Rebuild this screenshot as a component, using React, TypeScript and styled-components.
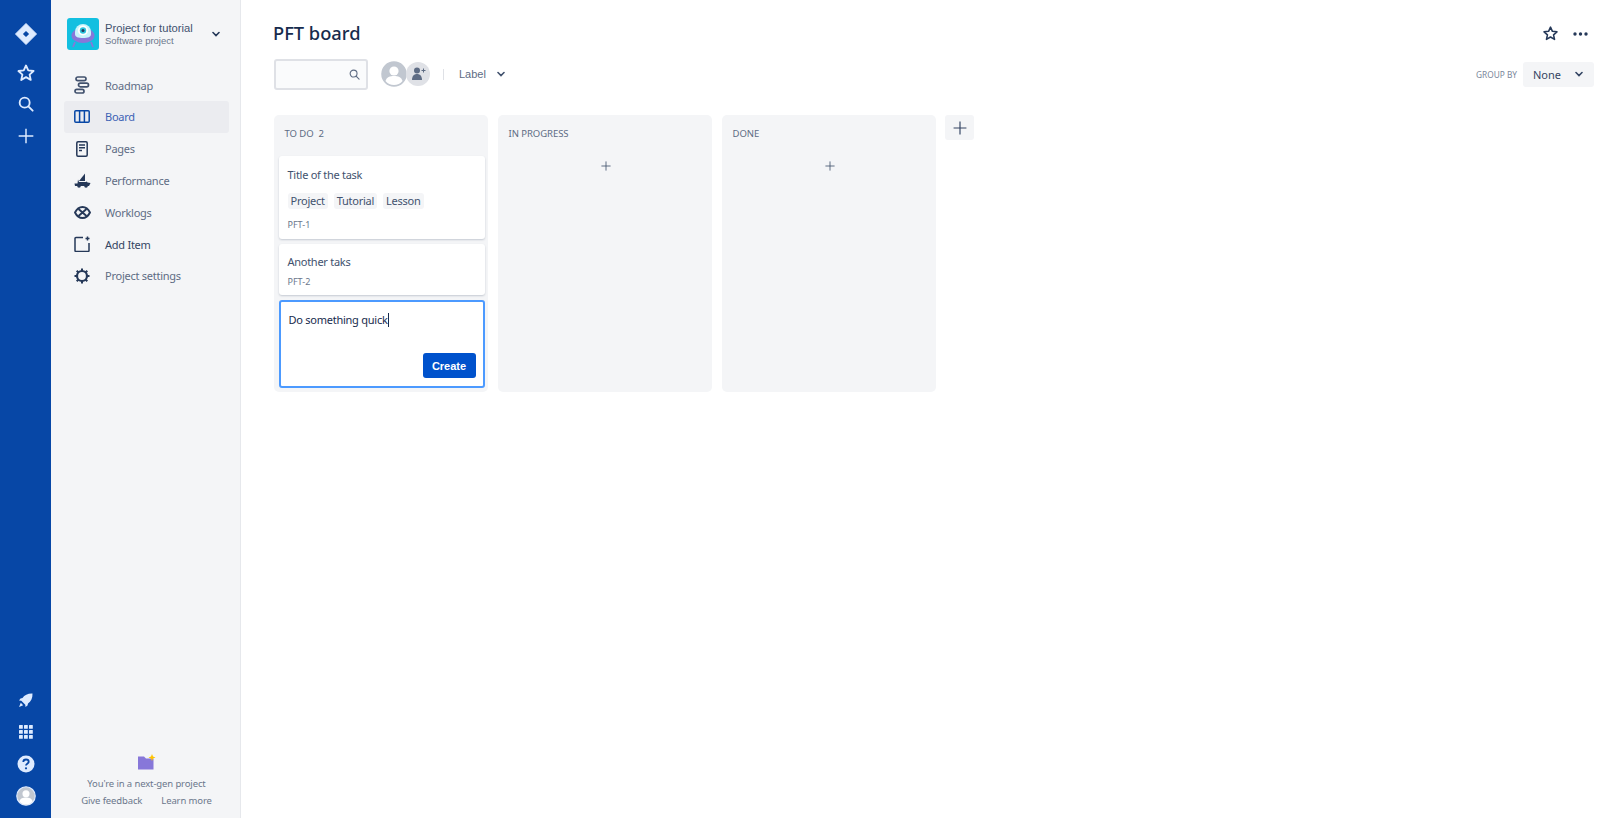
import React from "react";
import styled, { createGlobalStyle } from "styled-components";

const GlobalStyle = createGlobalStyle`
  html, body {
    margin: 0;
    padding: 0;
    height: 100%;
    background: #ffffff;
    overflow: hidden;
  }
  * {
    box-sizing: border-box;
  }
`;

const Page = styled.div`
  display: flex;
  width: 1600px;
  height: 818px;
  font-family: "Noto Sans", "Open Sans", sans-serif;
  color: #172b4d;
`;

const GlobalNav = styled.nav`
  width: 51px;
  flex: none;
  background: #0747a6;
  display: flex;
  flex-direction: column;
  align-items: center;
  justify-content: space-between;
  padding: 18px 0 6px;
`;

const GlobalGroup = styled.div`
  display: flex;
  flex-direction: column;
  align-items: center;
`;

const GlobalIcon = styled.div<{ $gap?: number }>`
  width: 32px;
  height: 32px;
  display: flex;
  align-items: center;
  justify-content: center;
  margin-bottom: ${(props) => props.$gap ?? 0}px;
`;

const SideNav = styled.aside`
  width: 190px;
  flex: none;
  background: #f4f5f7;
  border-right: 1px solid #e6e8ec;
  display: flex;
  flex-direction: column;
  padding: 18px 11px 0 13px;
`;

const ProjectHeader = styled.div`
  display: flex;
  align-items: center;
  height: 32px;
  margin-left: 3px;
  margin-bottom: 19px;
  padding-right: 9px;
`;

const ProjectAvatar = styled.div`
  width: 32px;
  height: 32px;
  border-radius: 3px;
  background: #12bfe0;
  overflow: hidden;
  flex: none;
`;

const ProjectText = styled.div`
  margin-left: 6px;
  flex: 1;
  min-width: 0;
  margin-top: -1px;
`;

const ProjectName = styled.div`
  font-family: "Liberation Sans", Arial, sans-serif;
  font-size: 11.2px;
  line-height: 13px;
  color: #42526e;
`;

const ProjectKind = styled.div`
  font-family: "Liberation Sans", Arial, sans-serif;
  font-size: 9.5px;
  line-height: 11px;
  color: #6b778c;
`;

const NavList = styled.div`
  display: flex;
  flex-direction: column;
`;

const NavRow = styled.div<{ $active?: boolean }>`
  display: flex;
  align-items: center;
  height: 32px;
  margin-bottom: -0.2px;
  border-radius: 3px;
  padding-left: 8px;
  background: ${(props) => (props.$active ? "#ebecf0" : "transparent")};
`;

const NavIcon = styled.div`
  width: 20px;
  height: 20px;
  display: flex;
  align-items: center;
  justify-content: center;
  margin-right: 13px;
  flex: none;
`;

const NavLabel = styled.span<{ $tone?: string }>`
  font-size: 11px;
  letter-spacing: -0.25px;
  color: ${(props) => props.$tone ?? "#5e6c84"};
`;

const SideFooter = styled.div`
  margin-top: auto;
  display: flex;
  flex-direction: column;
  align-items: center;
  padding-bottom: 10px;
  font-size: 9.5px;
  letter-spacing: -0.12px;
  color: #6b778c;
`;

const FooterText = styled.div`
  margin-top: 7px;
  line-height: 14px;
`;

const FooterLinks = styled.div`
  display: flex;
  gap: 19px;
  margin-top: 3px;
  line-height: 14px;
`;

const Main = styled.main`
  flex: 1;
  min-width: 0;
  padding: 18px 6px 0 33px;
`;

const TitleRow = styled.div`
  display: flex;
  align-items: center;
  justify-content: space-between;
  height: 30px;
`;

const Title = styled.h1`
  margin: 0 0 0 -1px;
  font-size: 18.3px;
  font-weight: 500;
  line-height: 30px;
  color: #172b4d;
`;

const TitleActions = styled.div`
  display: flex;
  align-items: center;
  gap: 14px;
  padding-right: 6px;
  margin-top: 1px;
`;

const Toolbar = styled.div`
  display: flex;
  align-items: center;
  height: 32px;
  margin-top: 10px;
`;

const SearchBox = styled.div`
  width: 94px;
  height: 31px;
  border: 2px solid #dfe1e6;
  border-radius: 3px;
  background: #fafbfc;
  display: flex;
  align-items: center;
  justify-content: flex-end;
  padding-right: 6px;
`;

const AvatarWrap = styled.div`
  display: flex;
  align-items: center;
  margin-left: 13px;
`;

const AddPerson = styled.div`
  width: 24px;
  height: 24px;
  border-radius: 50%;
  background: #dfe1e6;
  margin-left: -1px;
  display: flex;
  align-items: center;
  justify-content: center;
`;

const Divider = styled.div`
  width: 1px;
  height: 11px;
  background: #dfe1e6;
  margin: 0 15px 0 13px;
`;

const LabelFilter = styled.div`
  display: flex;
  align-items: center;
  gap: 11px;
  font-family: "Liberation Sans", Arial, sans-serif;
  font-size: 11px;
  color: #5e6c84;
`;

const GroupBy = styled.div`
  margin-left: auto;
  display: flex;
  align-items: center;
  gap: 6px;
`;

const GroupLabel = styled.span`
  font-size: 8.3px;
  color: #7a869a;
`;

const GroupSelect = styled.div`
  width: 71px;
  height: 25px;
  background: #f4f5f7;
  border-radius: 3px;
  display: flex;
  align-items: center;
  justify-content: space-between;
  padding: 0 11px 0 10px;
  font-size: 11px;
  color: #344563;
`;

const Board = styled.div`
  display: flex;
  align-items: flex-start;
  gap: 10px;
  margin-top: 25px;
`;

const Column = styled.section`
  width: 214px;
  height: 277px;
  background: #f4f5f7;
  border-radius: 5px;
  padding: 0 3.5px 0 4.5px;
`;

const ColumnHead = styled.div`
  height: 41px;
  display: flex;
  align-items: center;
  gap: 5px;
  padding: 0 0 4px 6px;
  font-size: 9.5px;
  letter-spacing: -0.05px;
  color: #5e6c84;
`;

const ColumnPlus = styled.div`
  display: flex;
  justify-content: center;
  margin-top: 5px;
`;

const Card = styled.article<{ $top: number; $bottom: number }>`
  background: #ffffff;
  border-radius: 3px;
  box-shadow: 0 1px 2px rgba(9, 30, 66, 0.2);
  padding: ${(props) => props.$top}px 9px ${(props) => props.$bottom}px;
  margin-bottom: 5px;
`;

const CardTitle = styled.div`
  font-size: 11px;
  letter-spacing: -0.27px;
  line-height: 18px;
  color: #42526e;
`;

const TagRow = styled.div`
  display: flex;
  gap: 6px;
  margin-top: 9px;
`;

const Tag = styled.span`
  background: #f4f5f7;
  border-radius: 3px;
  height: 16px;
  padding: 0 3px;
  font-size: 11px;
  letter-spacing: -0.25px;
  line-height: 16px;
  color: #42526e;
`;

const CardKey = styled.div<{ $top: number }>`
  font-size: 9px;
  line-height: 12px;
  color: #6b778c;
  margin-top: ${(props) => props.$top}px;
`;

const QuickCreate = styled.div`
  height: 88px;
  background: #ffffff;
  border: 2px solid #4c9aff;
  border-radius: 3px;
  padding: 9px 7px 8px 8px;
  display: flex;
  flex-direction: column;
  justify-content: space-between;
`;

const QuickText = styled.div`
  font-size: 11px;
  letter-spacing: -0.25px;
  line-height: 18px;
  color: #172b4d;
`;

const Caret = styled.span`
  display: inline-block;
  width: 1px;
  height: 14px;
  background: #172b4d;
  vertical-align: -3px;
`;

const CreateButton = styled.button`
  align-self: flex-end;
  width: 53px;
  height: 25px;
  border: none;
  border-radius: 3px;
  background: #0052cc;
  color: #ffffff;
  font-family: "Liberation Sans", Arial, sans-serif;
  font-size: 11px;
  font-weight: 700;
  padding: 0;
`;

const AddColumn = styled.div`
  width: 29px;
  height: 25px;
  background: #f4f5f7;
  border-radius: 3px;
  display: flex;
  align-items: center;
  justify-content: center;
  margin-left: -1px;
`;

const Star = ({ color, size }: { color: string; size: number }) => (
  <svg width={size} height={size} viewBox="0 0 24 24" fill="none" stroke={color} strokeWidth="2.2" strokeLinejoin="round">
    <path d="M12 3l2.7 5.9 6.4.7-4.8 4.3 1.4 6.4L12 17l-5.7 3.3 1.4-6.4-4.8-4.3 6.4-.7z" />
  </svg>
);

const Plus = ({ color, size, width }: { color: string; size: number; width: number }) => (
  <svg width={size} height={size} viewBox="0 0 24 24" stroke={color} strokeWidth={width}>
    <path d="M12 1v22M1 12h22" />
  </svg>
);

const Chevron = ({ color }: { color: string }) => (
  <svg width="8" height="6" viewBox="0 0 8 6" fill="none" stroke={color} strokeWidth="1.6" strokeLinecap="round">
    <path d="M1 1.5l3 3 3-3" />
  </svg>
);

const Loupe = ({ color, size, width }: { color: string; size: number; width: number }) => (
  <svg width={size} height={size} viewBox="0 0 24 24" fill="none" stroke={color} strokeWidth={width} strokeLinecap="round">
    <circle cx="10" cy="10" r="7.5" />
    <path d="M15.5 15.5L22 22" />
  </svg>
);

const DefaultAvatar = ({ size, ring, bg, fg }: { size: number; ring: string; bg: string; fg: string }) => (
  <svg width={size} height={size} viewBox="0 0 26 26">
    <circle cx="13" cy="13" r="12" fill={bg} stroke={ring} strokeWidth="1.5" />
    <circle cx="13" cy="10" r="4.6" fill={fg} />
    <path d="M4.5 20c1-4 4.5-5 8.5-5s7.5 1 8.5 5c-2 2.7-5 4-8.5 4s-6.500-1.300-8.500-4z" fill={fg} />
  </svg>
);

const navItems: { label: string; active?: boolean; tone?: string; icon: React.ReactNode }[] = [
  {
    label: "Roadmap",
    icon: (
      <svg width="16" height="18" viewBox="0 0 16 18" fill="none" stroke="#42526e" strokeWidth="1.7">
        <rect x="2" y="1" width="10" height="3.6" rx="1.8" />
        <rect x="4.5" y="7.2" width="10" height="3.6" rx="1.8" />
        <rect x="1" y="13.4" width="9" height="3.6" rx="1.8" />
      </svg>
    ),
  },
  {
    label: "Board",
    active: true,
    tone: "#3b62b5",
    icon: (
      <svg width="16" height="13" viewBox="0 0 16 13" fill="none" stroke="#0747a6" strokeWidth="1.5">
        <rect x="0.8" y="0.8" width="14.4" height="11.4" rx="1" />
        <path d="M5.6 1v11M10.4 1v11" />
      </svg>
    ),
  },
  {
    label: "Pages",
    icon: (
      <svg width="12" height="16" viewBox="0 0 12 16" fill="none" stroke="#253858" strokeWidth="1.5">
        <rect x="0.8" y="0.8" width="10.4" height="14.4" rx="1.2" />
        <path d="M3 4h6M3 6.8h6M3 9.6h3" />
      </svg>
    ),
  },
  {
    label: "Performance",
    icon: (
      <svg width="17" height="15" viewBox="0 0 17 15" fill="#253858">
        <path d="M11 0.5L5 8h6z" />
        <path d="M4 6.500l1 2.500h7.500V8l1 1.500 3 .5-1.500 3H1L0.500 10.500l3 0z" />
        <circle cx="5" cy="13" r="1.8" />
        <circle cx="12" cy="13" r="1.8" />
      </svg>
    ),
  },
  {
    label: "Worklogs",
    icon: (
      <svg width="17" height="13" viewBox="0 0 17 13" fill="none" stroke="#253858" strokeWidth="1.9">
        <path d="M1 6.500C3 2.500 5.500 1 8.500 1s5.500 1.500 7.500 5.500c-2 4-4.500 5.500-7.500 5.500S3 10.500 1 6.500z" />
        <path d="M4.500 3l8 7M12.500 3l-8 7" />
      </svg>
    ),
  },
  {
    label: "Add Item",
    tone: "#344563",
    icon: (
      <svg width="16" height="16" viewBox="0 0 16 16" fill="none" stroke="#253858" strokeWidth="1.5">
        <path d="M9 1.500H2a1 1 0 0 0-1 1v12a1 1 0 0 0 1 1h12a1 1 0 0 0 1-1V7" />
        <path d="M13.500 0.500v4M11.500 2.500h4" />
      </svg>
    ),
  },
  {
    label: "Project settings",
    icon: (
      <svg width="16" height="16" viewBox="0 0 16 16" fill="none" stroke="#253858" strokeWidth="2.2">
        <circle cx="8" cy="8" r="5" />
        <path strokeWidth="2" d="M8 0.500v2.500M8 13v2.500M0.500 8h2.500M13 8h2.500M2.700 2.700l1.800 1.800M11.500 11.500l1.800 1.800M13.300 2.700l-1.800 1.800M4.500 11.500l-1.800 1.800" />
      </svg>
    ),
  },
];

export default function App(): JSX.Element {
  return (
    <Page>
      <GlobalStyle />
      <GlobalNav>
        <GlobalGroup>
          <GlobalIcon $gap={7}>
            <svg width="22" height="22" viewBox="0 0 22 22">
              <path d="M11 0.500L21.500 11 11 21.500 0.500 11z" fill="#deebff" stroke="#deebff" strokeLinejoin="round" />
              <rect x="8.800" y="8.800" width="4.400" height="4.400" transform="rotate(45 11 11)" fill="#0747a6" />
            </svg>
          </GlobalIcon>
          <GlobalIcon $gap={-1}>
            <Star color="#deebff" size={20} />
          </GlobalIcon>
          <GlobalIcon>
            <Loupe color="#deebff" size={16} width={2.8} />
          </GlobalIcon>
          <GlobalIcon>
            <Plus color="#deebff" size={16} width={2.2} />
          </GlobalIcon>
        </GlobalGroup>
        <GlobalGroup>
          <GlobalIcon>
            <svg width="15" height="15" viewBox="0 0 15 15" fill="#deebff">
              <path d="M14.500 0.500C10 0.300 6.500 2 4.500 5L2.500 5.500 1 7.500l2.300.2 4 4 .2 2.300 2-1.500.5-2c3-2 4.700-5.500 4.500-10z" />
              <path d="M2.800 9.800l2.400 2.400-4.200 1.800z" />
            </svg>
          </GlobalIcon>
          <GlobalIcon>
            <svg width="14" height="14" viewBox="0 0 14 14" fill="#deebff">
              {[0, 5, 10].map((y) =>
                [0, 5, 10].map((x) => <rect key={`${x}-${y}`} x={x} y={y} width="3.8" height="3.8" rx="0.5" />)
              )}
            </svg>
          </GlobalIcon>
          <GlobalIcon>
            <svg width="18" height="18" viewBox="0 0 18 18">
              <circle cx="9" cy="9" r="8.500" fill="#deebff" />
              <path d="M6.300 7c0-1.600 1.200-2.500 2.700-2.500s2.700.9 2.700 2.300c0 2-2.700 2-2.700 3.700" fill="none" stroke="#0747a6" strokeWidth="1.8" />
              <circle cx="9" cy="13.300" r="1.100" fill="#0747a6" />
            </svg>
          </GlobalIcon>
          <GlobalIcon>
            <DefaultAvatar size={20} ring="#deebff" bg="#c1c7d0" fg="#ffffff" />
          </GlobalIcon>
        </GlobalGroup>
      </GlobalNav>

      <SideNav>
        <ProjectHeader>
          <ProjectAvatar>
            <svg width="32" height="32" viewBox="0 0 32 32">
              <path d="M8 24l-2 5M24 24l2 5" stroke="#8777d9" strokeWidth="1.8" />
              <ellipse cx="16" cy="17.500" rx="11.500" ry="7.500" fill="#8777d9" />
              <path d="M8 14a8 8 0 0 1 16 0v2c0 3-3 4-8 4s-8-1-8-4z" fill="#c8f4fb" />
              <circle cx="16" cy="12.500" r="5" fill="#ffffff" />
              <circle cx="16" cy="12.500" r="3.200" fill="#2cc3dc" />
              <circle cx="16" cy="12.500" r="1.500" fill="#253858" />
            </svg>
          </ProjectAvatar>
          <ProjectText>
            <ProjectName>Project for tutorial</ProjectName>
            <ProjectKind>Software project</ProjectKind>
          </ProjectText>
          <Chevron color="#253858" />
        </ProjectHeader>
        <NavList>
          {navItems.map((item) => (
            <NavRow key={item.label} $active={item.active}>
              <NavIcon>{item.icon}</NavIcon>
              <NavLabel $tone={item.tone}>{item.label}</NavLabel>
            </NavRow>
          ))}
        </NavList>
        <SideFooter>
          <svg width="19" height="16" viewBox="0 0 19 16">
            <path d="M1 2.500h6l2 2h7.500v11H1z" fill="#8777d9" />
            <path d="M15 0l1 2.500 2.500 1-2.500 1-1 2.500-1-2.500-2.500-1 2.500-1z" fill="#ffc400" />
          </svg>
          <FooterText>You're in a next-gen project</FooterText>
          <FooterLinks>
            <span>Give feedback</span>
            <span>Learn more</span>
          </FooterLinks>
        </SideFooter>
      </SideNav>

      <Main>
        <TitleRow>
          <Title>PFT board</Title>
          <TitleActions>
            <Star color="#253858" size={17} />
            <svg width="15" height="4" viewBox="0 0 15 4" fill="#253858">
              <circle cx="2" cy="2" r="1.7" />
              <circle cx="7.5" cy="2" r="1.7" />
              <circle cx="13" cy="2" r="1.7" />
            </svg>
          </TitleActions>
        </TitleRow>
        <Toolbar>
          <SearchBox>
            <Loupe color="#5e6c84" size={11} width={2.4} />
          </SearchBox>
          <AvatarWrap>
            <DefaultAvatar size={26} ring="#c1c7d0" bg="#c1c7d0" fg="#ffffff" />
            <AddPerson>
              <svg width="15" height="14" viewBox="0 0 15 14" fill="#5e6c84">
                <circle cx="6" cy="3.5" r="3" />
                <path d="M1 13c0-4 2-6 5-6s5 2 5 6z" />
                <path d="M12.500 1.500v4M10.500 3.500h4" stroke="#5e6c84" strokeWidth="1" />
              </svg>
            </AddPerson>
          </AvatarWrap>
          <Divider />
          <LabelFilter>
            Label
            <Chevron color="#42526e" />
          </LabelFilter>
          <GroupBy>
            <GroupLabel>GROUP BY</GroupLabel>
            <GroupSelect>
              None
              <Chevron color="#344563" />
            </GroupSelect>
          </GroupBy>
        </Toolbar>

        <Board>
          <Column>
            <ColumnHead>
              TO DO <span>2</span>
            </ColumnHead>
            <Card $top={10} $bottom={8}>
              <CardTitle>Title of the task</CardTitle>
              <TagRow>
                <Tag>Project</Tag>
                <Tag>Tutorial</Tag>
                <Tag>Lesson</Tag>
              </TagRow>
              <CardKey $top={10}>PFT-1</CardKey>
            </Card>
            <Card $top={9} $bottom={7}>
              <CardTitle>Another taks</CardTitle>
              <CardKey $top={5}>PFT-2</CardKey>
            </Card>
            <QuickCreate>
              <QuickText>
                Do something quick
                <Caret />
              </QuickText>
              <CreateButton>Create</CreateButton>
            </QuickCreate>
          </Column>
          <Column>
            <ColumnHead>IN PROGRESS</ColumnHead>
            <ColumnPlus>
              <Plus color="#42526e" size={10} width={2} />
            </ColumnPlus>
          </Column>
          <Column>
            <ColumnHead>DONE</ColumnHead>
            <ColumnPlus>
              <Plus color="#42526e" size={10} width={2} />
            </ColumnPlus>
          </Column>
          <AddColumn>
            <Plus color="#344563" size={14} width={2} />
          </AddColumn>
        </Board>
      </Main>
    </Page>
  );
}
